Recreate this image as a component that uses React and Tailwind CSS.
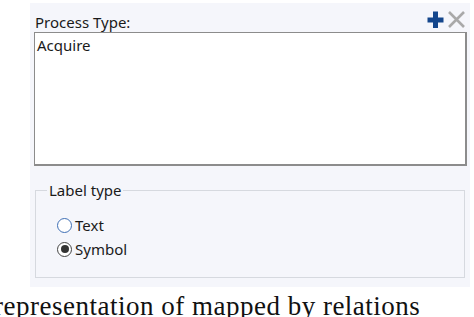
import React from "react";

const Radio = ({ checked, label, hover }) => (
  <div className="flex items-center gap-[3px] h-[24px]">
    <span
      className={`w-[15px] h-[15px] rounded-full border flex items-center justify-center bg-white ${
        hover ? "border-[#3f6fb5]" : "border-[#444]"
      }`}
    >
      {checked && <span className="w-[8px] h-[8px] rounded-full bg-[#333]" />}
    </span>
    <span className="text-[15px] text-[#1a1a1a]">{label}</span>
  </div>
);

export default function App() {
  return (
    <div
      className="w-[474px] h-[317px] overflow-hidden bg-white"
      style={{ fontFamily: '"Noto Sans", "Open Sans", sans-serif' }}
    >
      {/* PANEL */}
      <div className="ml-[30px] mt-[3px] w-[440px] h-[284px] bg-[#f5f6fb] pl-[4px] pr-[3px]">
        <div className="flex items-end justify-between h-[29px] pb-[2px]">
          <span className="text-[15px] leading-none text-[#1a1a1a] pl-[1px]">Process Type:</span>
          <div className="flex items-center gap-[3px] pr-[1px] mb-[1px]">
            <svg width="17" height="17" viewBox="0 0 17 17">
              <path d="M6 0.5h5v6h5.5v5H11v5.5H6V11.5H0.5v-5H6z" fill="#14468c" />
            </svg>
            <svg width="19" height="19" viewBox="0 0 19 19">
              <path d="M2 2L17 17M17 2L2 17" stroke="#a9a9a9" strokeWidth="2.6" />
            </svg>
          </div>
        </div>

        {/* LIST */}
        <div className="h-[134px] w-[433px] bg-white border border-[#8c8c8c] border-b-2 border-r-2 px-[2px] pt-[2px]">
          <div className="text-[15px] leading-[21px] text-[#1a1a1a]">Acquire</div>
        </div>

        {/* GROUP BOX */}
        <fieldset className="mt-[16px] ml-[1px] w-[430px] h-[96px] border border-[#d6d9df] pl-[21px] pt-[15px]">
          <legend className="ml-[-10px] px-[2px] text-[15px] leading-[16px] text-[#1a1a1a]">
            Label type
          </legend>
          <Radio label="Text" hover />
          <Radio label="Symbol" checked />
        </fieldset>
      </div>

      {/* CUT-OFF CAPTION */}
      <div
        className="ml-[-6px] mt-[6px] text-[27px] leading-none whitespace-nowrap tracking-[0.5px] text-[#111]"
        style={{ fontFamily: '"Liberation Serif", serif' }}
      >
        representation of mapped by relations
      </div>
    </div>
  );
}
